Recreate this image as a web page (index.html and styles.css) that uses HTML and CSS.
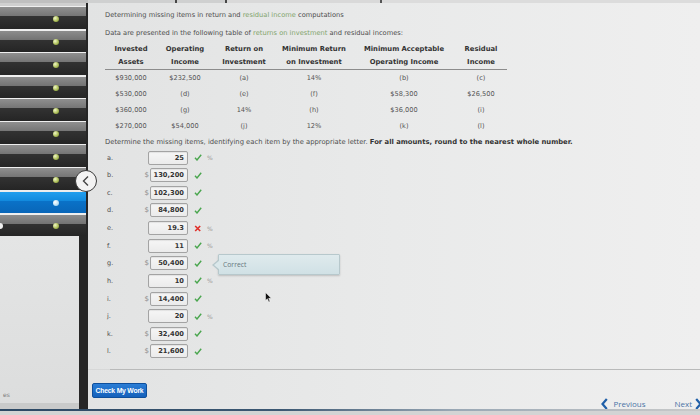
FILE: index.html
```html
<!DOCTYPE html>
<html lang="en">
<head>
<meta charset="utf-8">
<title>Determining missing items</title>
<link rel="stylesheet" href="styles.css">
</head>
<body>
<div class="screen">
  <div class="topbar"></div>
  <div class="layout">
    <aside class="sidebar">
      <div class="nav">
        <div class="item"><span class="dot"></span></div>
        <div class="item"><span class="dot"></span></div>
        <div class="item"><span class="dot"></span></div>
        <div class="item"><span class="dot"></span></div>
        <div class="item"><span class="dot"></span></div>
        <div class="item"><span class="dot"></span></div>
        <div class="item"><span class="dot"></span></div>
        <div class="item"><span class="dot"></span></div>
        <div class="item active"><span class="dot"></span></div>
        <div class="item"><span class="edge"></span><span class="dot"></span></div>
      </div>
      <div class="panel"><span class="es">es</span></div>
    </aside>
    <main class="main">
      <div class="content">
        <p class="title">Determining missing items in return and <span class="hl">residual income</span> computations</p>
        <p class="intro">Data are presented in the following table of <span class="hl">returns on investment</span> and residual incomes:</p>
        <table class="data">
          <colgroup>
            <col class="c1"><col class="c2"><col class="c3"><col class="c4"><col class="c5"><col class="c6">
          </colgroup>
          <thead>
            <tr>
              <th>Invested<br>Assets</th>
              <th>Operating<br>Income</th>
              <th>Return on<br>Investment</th>
              <th>Minimum Return<br>on Investment</th>
              <th>Minimum Acceptable<br>Operating Income</th>
              <th>Residual<br>Income</th>
            </tr>
          </thead>
          <tbody>
            <tr><td>$930,000</td><td>$232,500</td><td>(a)</td><td>14%</td><td>(b)</td><td>(c)</td></tr>
            <tr><td>$530,000</td><td>(d)</td><td>(e)</td><td>(f)</td><td>$58,300</td><td>$26,500</td></tr>
            <tr><td>$360,000</td><td>(g)</td><td>14%</td><td>(h)</td><td>$36,000</td><td>(i)</td></tr>
            <tr><td>$270,000</td><td>$54,000</td><td>(j)</td><td>12%</td><td>(k)</td><td>(l)</td></tr>
          </tbody>
        </table>
        <p class="instr">Determine the missing items, identifying each item by the appropriate letter. <b>For all amounts, round to the nearest whole number.</b></p>
        <div class="answers">
          <div class="row"><span class="letter">a.</span><span class="money"><span class="box">25</span></span><span class="mark"><svg width="8" height="7" viewBox="0 0 8 7"><path d="M1 3.8L3 6L7.2 0.8" fill="none" stroke="#4aa64e" stroke-width="1.4"/></svg></span><span class="pct">%</span></div>
          <div class="row"><span class="letter">b.</span><span class="money"><span class="cur">$</span><span class="box sm">130,200</span></span><span class="mark"><svg width="8" height="7" viewBox="0 0 8 7"><path d="M1 3.8L3 6L7.2 0.8" fill="none" stroke="#4aa64e" stroke-width="1.4"/></svg></span></div>
          <div class="row"><span class="letter">c.</span><span class="money"><span class="cur">$</span><span class="box sm">102,300</span></span><span class="mark"><svg width="8" height="7" viewBox="0 0 8 7"><path d="M1 3.8L3 6L7.2 0.8" fill="none" stroke="#4aa64e" stroke-width="1.4"/></svg></span></div>
          <div class="row"><span class="letter">d.</span><span class="money"><span class="cur">$</span><span class="box sm">84,800</span></span><span class="mark"><svg width="8" height="7" viewBox="0 0 8 7"><path d="M1 3.8L3 6L7.2 0.8" fill="none" stroke="#4aa64e" stroke-width="1.4"/></svg></span></div>
          <div class="row"><span class="letter">e.</span><span class="money"><span class="box">19.3</span></span><span class="mark"><svg width="8" height="7" viewBox="0 0 8 7"><path d="M1.2 1L6.2 6M6.2 1L1.2 6" fill="none" stroke="#e0302a" stroke-width="1.6"/></svg></span><span class="pct">%</span></div>
          <div class="row"><span class="letter">f.</span><span class="money"><span class="box">11</span></span><span class="mark"><svg width="8" height="7" viewBox="0 0 8 7"><path d="M1 3.8L3 6L7.2 0.8" fill="none" stroke="#4aa64e" stroke-width="1.4"/></svg></span><span class="pct">%</span></div>
          <div class="row"><span class="letter">g.</span><span class="money"><span class="cur">$</span><span class="box sm">50,400</span></span><span class="mark"><svg width="8" height="7" viewBox="0 0 8 7"><path d="M1 3.8L3 6L7.2 0.8" fill="none" stroke="#4aa64e" stroke-width="1.4"/></svg></span><span class="tip">Correct</span></div>
          <div class="row"><span class="letter">h.</span><span class="money"><span class="box">10</span></span><span class="mark"><svg width="8" height="7" viewBox="0 0 8 7"><path d="M1 3.8L3 6L7.2 0.8" fill="none" stroke="#4aa64e" stroke-width="1.4"/></svg></span><span class="pct">%</span></div>
          <div class="row"><span class="letter">i.</span><span class="money"><span class="cur">$</span><span class="box sm">14,400</span></span><span class="mark"><svg width="8" height="7" viewBox="0 0 8 7"><path d="M1 3.8L3 6L7.2 0.8" fill="none" stroke="#4aa64e" stroke-width="1.4"/></svg></span></div>
          <div class="row"><span class="letter">j.</span><span class="money"><span class="box">20</span></span><span class="mark"><svg width="8" height="7" viewBox="0 0 8 7"><path d="M1 3.8L3 6L7.2 0.8" fill="none" stroke="#4aa64e" stroke-width="1.4"/></svg></span><span class="pct">%</span></div>
          <div class="row"><span class="letter">k.</span><span class="money"><span class="cur">$</span><span class="box sm">32,400</span></span><span class="mark"><svg width="8" height="7" viewBox="0 0 8 7"><path d="M1 3.8L3 6L7.2 0.8" fill="none" stroke="#4aa64e" stroke-width="1.4"/></svg></span></div>
          <div class="row"><span class="letter">l.</span><span class="money"><span class="cur">$</span><span class="box sm">21,600</span></span><span class="mark"><svg width="8" height="7" viewBox="0 0 8 7"><path d="M1 3.8L3 6L7.2 0.8" fill="none" stroke="#4aa64e" stroke-width="1.4"/></svg></span></div>
        </div>
      </div>
      <div class="track"><div class="thumb"></div></div>
      <div class="footer">
        <button class="check">Check My Work</button>
        <div class="pager">
          <svg class="chev" width="7" height="12" viewBox="0 0 7 12"><path d="M5.8 1L1.5 6L5.8 11" fill="none" stroke="#1f5fa8" stroke-width="2.2"/></svg>
          <span class="prev">Previous</span>
          <span class="next">Next</span>
          <svg class="chev chev-r" width="7" height="12" viewBox="0 0 7 12"><path d="M1.2 1L5.5 6L1.2 11" fill="none" stroke="#1f5fa8" stroke-width="2.2"/></svg>
        </div>
      </div>
    </main>
  </div>
  <div class="bottombar"></div>
  <button class="collapse" aria-label="Collapse"><svg width="12" height="12" viewBox="0 0 12 12"><path d="M8 1.5L3.5 6L8 10.5" fill="none" stroke="#444" stroke-width="1.4"/></svg></button>
  <svg class="cursor" width="7" height="11" viewBox="0 0 7 11"><path d="M0.5 0.5L0.5 8.5L2.4 6.8L3.8 10L5 9.4L3.7 6.3L6.3 6.3Z" fill="#111" stroke="#fff" stroke-width="0.5"/></svg>
</div>
</body>
</html>
```
FILE: styles.css
```css
html, body {
  margin: 0;
  padding: 0;
}

.screen {
  width: 700px;
  height: 415px;
  overflow: hidden;
  position: relative;
  background: #d3d4d4;
  font-family: "DejaVu Sans", Verdana, sans-serif;
}

.topbar {
  height: 3px;
  background: linear-gradient(to right, #bfbfbf 0 88px, #cfd0d0 88px 175px, #474747 175px 177px, #cfd0d0 177px 225px, #474747 225px 227px, #d9d9d9 227px 380px, #555 380px 382px, #dcdcdc 382px);
}

.layout {
  display: flex;
  height: 406px;
}

/* Sidebar */
.sidebar {
  width: 88px;
  flex: none;
  background: #262626;
  display: flex;
  flex-direction: column;
}

.nav {
  width: 86px;
  padding-top: 3px;
  background: #cfcfcf;
}

.item {
  height: 23px;
  box-sizing: border-box;
  display: flex;
  align-items: flex-start;
  padding: 10px 0 0 53px;
  background: linear-gradient(to bottom, #efefef 0 1.5px, #8e8e8e 1.5px, #747474 10.5px, #323232 10.5px, #252525 23px);
}

.item.active {
  background: linear-gradient(to bottom, #ededed 0 1.5px, #22a0ef 1.5px, #1189dd 11px, #0a72c8 11px, #0966b8 23px);
}

.dot {
  width: 6px;
  height: 6px;
  border-radius: 50%;
  background: radial-gradient(circle at 35% 35%, #f1f7c8, #aec05a 55%, #74862f);
}

.item.active .dot {
  background: radial-gradient(circle at 35% 35%, #ffffff, #bfe2f6 55%, #7fb9de);
}

.item:last-child {
  padding-left: 0;
}

.edge {
  width: 3px;
  height: 6px;
  border-radius: 0 3px 3px 0;
  background: #f0f0f0;
  margin-right: 50px;
}

.panel {
  flex: 1;
  width: 79px;
  box-sizing: border-box;
  background: linear-gradient(to bottom, #e4e5e5, #dcdddd);
  border-bottom: 6px solid #c9caca;
  display: flex;
  align-items: flex-end;
  padding: 0 0 3px 3px;
}

.es {
  font-size: 6px;
  color: #7a7a7a;
  line-height: 10px;
}

/* Main */
.main {
  flex: 1;
  min-width: 0;
  display: flex;
  flex-direction: column;
  overflow: hidden;
  background: linear-gradient(to right, #e2e3e3, #e9eaea 50%, #efefef);
}

.content {
  padding: 7px 0 0 17px;
  color: #4d4d4d;
  font-size: 6.5px;
}

.title, .intro, .instr {
  margin: 0;
  line-height: 10px;
  font-size: 6.7px;
  color: #4d4d4d;
  white-space: nowrap;
}

.intro {
  margin-top: 8px;
}

.hl {
  color: #82a46c;
}

.instr {
  margin-top: 2.5px;
  font-size: 6.8px;
}

.instr b {
  color: #333;
}

.data {
  margin-top: 5px;
  border-collapse: collapse;
  table-layout: fixed;
  width: 402px;
}

.c1 { width: 52px; }
.c2 { width: 56px; }
.c3 { width: 62px; }
.c4 { width: 78px; }
.c5 { width: 102px; }
.c6 { width: 52px; }

.data th {
  padding: 0;
  font-size: 6.8px;
  font-weight: bold;
  color: #333;
  line-height: 13px;
  text-align: center;
  border-bottom: 1.5px solid #8c8c8c;
  white-space: nowrap;
}

.data td {
  padding: 0;
  height: 16px;
  line-height: 16px;
  font-size: 6.6px;
  color: #555;
  text-align: center;
  white-space: nowrap;
}

.answers {
  margin-top: 2.2px;
}

.row {
  display: flex;
  align-items: center;
  height: 17.64px;
  position: relative;
}

.letter {
  width: 36px;
  padding-left: 2px;
  box-sizing: border-box;
  color: #4d4d4d;
  font-size: 6.5px;
}

.money {
  width: 47px;
  display: flex;
  justify-content: flex-end;
  align-items: center;
}

.cur {
  color: #8a8a8a;
  font-size: 7px;
  margin-right: 1px;
}

.box {
  width: 40px;
  height: 14px;
  box-sizing: border-box;
  border: 1px solid #a3a3a3;
  border-radius: 2px;
  background: linear-gradient(#f6f6f6, #ebebeb);
  box-shadow: inset 0 1px 1px rgba(0, 0, 0, 0.08);
  text-align: right;
  font-weight: bold;
  color: #333;
  font-size: 6.7px;
  line-height: 12px;
  padding-right: 3px;
}

.box.sm {
  width: 38px;
}

.mark {
  margin-left: 6px;
  width: 8px;
  display: flex;
}

.pct {
  margin-left: 5px;
  color: #999;
  font-size: 6px;
}

.tip {
  position: absolute;
  left: 113px;
  top: 0;
  width: 122px;
  height: 21px;
  box-sizing: border-box;
  background: linear-gradient(#dfeaed, #d0e1e5);
  border: 1px solid #b7c8cc;
  border-radius: 1px;
  box-shadow: 0 1px 2px rgba(0, 0, 0, 0.18);
  padding-left: 4px;
  line-height: 19px;
  font-size: 6.8px;
  color: #66777d;
  font-family: "Open Sans", "DejaVu Sans", sans-serif;
}

.tip::before {
  content: "";
  position: absolute;
  left: -7px;
  top: 3.5px;
  border-style: solid;
  border-width: 6px 7px 6px 0;
  border-color: transparent #b7c8cc transparent transparent;
}

.tip::after {
  content: "";
  position: absolute;
  left: -5.5px;
  top: 4.5px;
  border-style: solid;
  border-width: 5px 6px 5px 0;
  border-color: transparent #dbe8eb transparent transparent;
}

.track {
  margin-top: 8.5px;
  height: 3px;
  background: #d7d8d8;
  display: flex;
}

.thumb {
  margin-left: 22px;
  flex: 1;
  background: #c6c7c7;
  border-top: 1px solid #b9baba;
}

.footer {
  flex: 1;
  display: flex;
  align-items: flex-start;
}

.check {
  margin: 13px 0 0 4px;
  width: 55px;
  height: 15px;
  padding: 0;
  border: 1px solid #0e4f9c;
  border-radius: 2px;
  background: linear-gradient(#2a7dd6, #1561bb);
  color: #fff;
  font-family: "Liberation Sans", Arial, sans-serif;
  font-weight: bold;
  font-size: 6.8px;
  letter-spacing: -0.2px;
  line-height: 13px;
}

.pager {
  margin: 27px -2px 0 auto;
  display: flex;
  align-items: center;
  height: 14px;
  font-family: "Open Sans", "DejaVu Sans", sans-serif;
  font-size: 8px;
  color: #4a74a6;
}

.prev {
  margin-left: 5px;
  width: 34px;
}

.next {
  margin-left: 27px;
}

.chev-r {
  margin-left: 3px;
}

.bottombar {
  height: 2px;
  background: linear-gradient(to right, #2c4864, #3c5873 40%, #9aa8b5 65%, #c9caca);
}

.collapse {
  position: absolute;
  left: 75px;
  top: 170px;
  width: 22px;
  height: 22px;
  padding: 0;
  border: 1.5px solid #3a3a3a;
  border-radius: 50%;
  background: #f3f3f3;
  display: flex;
  align-items: center;
  justify-content: center;
}

.cursor {
  position: absolute;
  left: 265px;
  top: 292px;
}
```
